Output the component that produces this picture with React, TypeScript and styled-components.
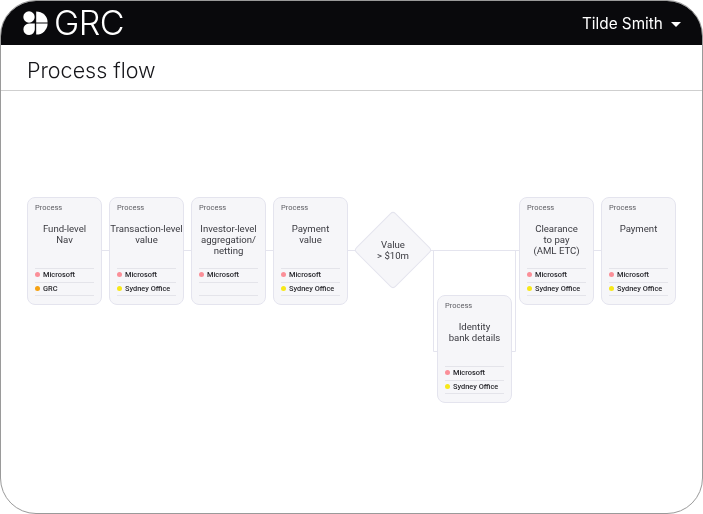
import styled, { createGlobalStyle } from "styled-components";

const GlobalStyle = createGlobalStyle`
  html, body {
    margin: 0;
    padding: 0;
    background: #ffffff;
  }
  body {
    font-family: Inter, "Liberation Sans", sans-serif;
  }
`;

const Frame = styled.div`
  width: 703px;
  height: 514px;
  box-sizing: border-box;
  border: 1px solid #9a9a9a;
  border-radius: 36px;
  overflow: hidden;
  background: #ffffff;
  display: flex;
  flex-direction: column;
`;

const Header = styled.header`
  height: 44px;
  flex: none;
  background: #09090c;
  color: #ffffff;
  display: flex;
  align-items: center;
  justify-content: space-between;
  padding: 0 21px 0 22px;
`;

const Brand = styled.div`
  display: flex;
  align-items: center;
  gap: 6px;
  will-change: transform;
`;

const BrandName = styled.span`
  font-size: 34px;
  font-weight: 300;
  letter-spacing: -0.6px;
  line-height: 1;
`;

const User = styled.div`
  display: flex;
  align-items: center;
  gap: 8px;
  font-size: 15.3px;
  font-weight: 400;
  will-change: transform;
`;

const Caret = styled.span`
  width: 0;
  height: 0;
  border-left: 5px solid transparent;
  border-right: 5px solid transparent;
  border-top: 5px solid #ffffff;
  margin-top: 2px;
`;

const TitleBar = styled.div`
  height: 46px;
  flex: none;
  box-sizing: border-box;
  border-bottom: 1px solid #cfcfcf;
  padding: 5px 26px 0;
  display: flex;
  align-items: center;
`;

const PageTitle = styled.h1`
  margin: 0;
  font-size: 21.5px;
  font-weight: 300;
  color: #16161a;
  will-change: transform;
`;

const Canvas = styled.main`
  position: relative;
  flex: 1;
`;

const Wires = styled.svg`
  position: absolute;
  left: 0;
  top: 0;
`;

const Card = styled.section<{ $x: number; $y: number }>`
  position: absolute;
  left: ${({ $x }) => $x}px;
  top: ${({ $y }) => $y}px;
  width: 75px;
  height: 108px;
  box-sizing: border-box;
  background: #f6f6f9;
  border: 1px solid #e4e4ee;
  border-radius: 8px;
  padding: 5px 7px 8px;
  display: flex;
  flex-direction: column;
  font-family: Roboto, "Liberation Sans", sans-serif;
  will-change: transform;
`;

const Kind = styled.div`
  font-size: 7.5px;
  line-height: 10px;
  color: #5c5c62;
`;

const CardTitle = styled.div`
  flex: 1;
  margin-top: 10px;
  font-size: 9.6px;
  line-height: 11px;
  color: #3a3a40;
  text-align: center;
  white-space: nowrap;
  display: flex;
  flex-direction: column;
  align-items: center;
`;

const Row = styled.div`
  height: 13.5px;
  box-sizing: border-box;
  border-top: 1px solid #e4e4ea;
  padding-bottom: 1px;
  display: flex;
  align-items: center;
  gap: 3px;
  font-size: 7.4px;
  font-weight: 500;
  color: #26262b;
  white-space: nowrap;

  &:last-child {
    height: 14.5px;
    border-bottom: 1px solid #e4e4ea;
  }
`;

const Dot = styled.span<{ $color: string }>`
  width: 5px;
  height: 5px;
  border-radius: 50%;
  background: ${({ $color }) => $color};
`;

const Diamond = styled.div`
  position: absolute;
  left: 353px;
  top: 120px;
  width: 78px;
  height: 78px;
  display: flex;
  align-items: center;
  justify-content: center;
  font-family: Roboto, "Liberation Sans", sans-serif;
`;

const DiamondShape = styled.div`
  position: absolute;
  left: 11px;
  top: 11px;
  width: 56px;
  height: 56px;
  box-sizing: border-box;
  background: #f6f6f9;
  border: 1px solid #e4e4ee;
  border-radius: 4px;
  transform: rotate(45deg);
`;

const DiamondLabel = styled.div`
  position: relative;
  font-size: 9.6px;
  line-height: 11px;
  color: #3a3a40;
  text-align: center;
  will-change: transform;
`;

const PINK = "#fb8f98";
const ORANGE = "#f5a213";
const YELLOW = "#f7e81a";

type Owner = { name: string; color: string };
type Step = { x: number; y: number; title: string[]; owners: Owner[] };

const microsoft = { name: "Microsoft", color: PINK };
const sydney = { name: "Sydney Office", color: YELLOW };
const grc = { name: "GRC", color: ORANGE };

const steps: Step[] = [
  { x: 26, y: 106, title: ["Fund-level", "Nav"], owners: [microsoft, grc] },
  { x: 108, y: 106, title: ["Transaction-level", "value"], owners: [microsoft, sydney] },
  { x: 190, y: 106, title: ["Investor-level", "aggregation/", "netting"], owners: [microsoft] },
  { x: 272, y: 106, title: ["Payment", "value"], owners: [microsoft, sydney] },
  { x: 518, y: 106, title: ["Clearance", "to pay", "(AML ETC)"], owners: [microsoft, sydney] },
  { x: 600, y: 106, title: ["Payment"], owners: [microsoft, sydney] },
  { x: 436, y: 204, title: ["Identity", "bank details"], owners: [microsoft, sydney] },
];

const Logo = () => (
  <svg width="25" height="24" viewBox="0 0 25 24" fill="#ffffff">
    <circle cx="6" cy="6" r="5.7" />
    <path d="M13.2.4A11.4 11 0 0 1 24.6 11.4H13.2z" />
    <path d="M11.8 12.6V18A5.7 5.7 0 1 1 6.1 12.6z" />
    <path d="M13.2 12.6H24.6A11.4 11 0 0 1 13.2 23.6z" />
  </svg>
);

const App = () => {
  return (
    <>
      <GlobalStyle />
      <Frame>
        <Header>
          <Brand>
            <Logo />
            <BrandName>GRC</BrandName>
          </Brand>
          <User>
            Tilde Smith
            <Caret />
          </User>
        </Header>
        <TitleBar>
          <PageTitle>Process flow</PageTitle>
        </TitleBar>
        <Canvas>
          <Wires width="701" height="422" fill="none" stroke="#e4e4ee">
            <path d="M100 159.5H354M430 159.5H600" />
            <path d="M432.5 159.5V260.5H437M514.5 159.5V260.5H511" />
          </Wires>
          {steps.map((step) => (
            <Card key={step.x} $x={step.x} $y={step.y}>
              <Kind>Process</Kind>
              <CardTitle>
                {step.title.map((line) => (
                  <span key={line}>{line}</span>
                ))}
              </CardTitle>
              <Row>
                <Dot $color={step.owners[0].color} />
                {step.owners[0].name}
              </Row>
              <Row>
                {step.owners[1] && <Dot $color={step.owners[1].color} />}
                {step.owners[1]?.name}
              </Row>
            </Card>
          ))}
          <Diamond>
            <DiamondShape />
            <DiamondLabel>
              Value
              <br />
              &gt; $10m
            </DiamondLabel>
          </Diamond>
        </Canvas>
      </Frame>
    </>
  );
};

export default App;
